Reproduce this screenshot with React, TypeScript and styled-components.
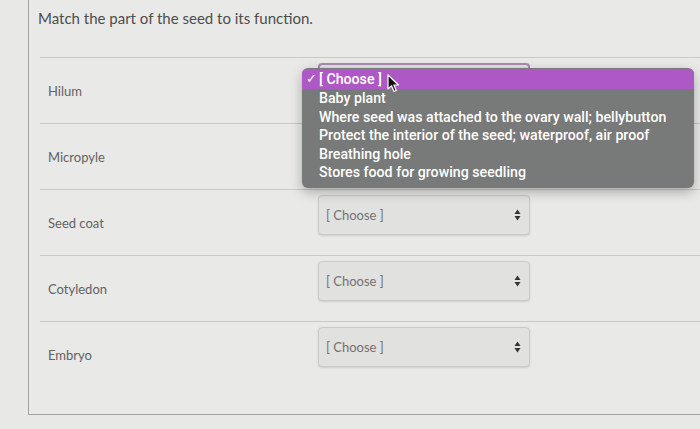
import styled, { createGlobalStyle } from 'styled-components';

const GlobalStyle = createGlobalStyle`
  html, body {
    margin: 0;
    padding: 0;
    background: #e8e8e6;
    width: 700px;
    height: 429px;
    overflow: hidden;
  }
  * {
    box-sizing: border-box;
  }
`;

const Frame = styled.div`
  margin-left: 28px;
  width: 672px;
  height: 415px;
  border-left: 1px solid #a3a3a1;
  border-bottom: 1px solid #a3a3a1;
  background: #e9e9e7;
  font-family: Lato, 'Noto Sans', sans-serif;
`;

const Title = styled.div`
  height: 57px;
  padding: 8px 0 0 9px;
  font-size: 15px;
  line-height: 20px;
  color: #4d4d4d;
`;

const Rows = styled.div`
  margin-left: 11px;
`;

const Row = styled.div`
  position: relative;
  display: grid;
  grid-template-columns: 278px 212px;
  align-items: center;
  height: 66px;
  border-top: 1px solid #c8c8c6;
`;

const Label = styled.div`
  padding-left: 8px;
  font-size: 13px;
  color: #626262;
`;

const Select = styled.div<{ open?: boolean }>`
  align-self: start;
  margin-top: 5px;
  height: 40px;
  display: flex;
  align-items: center;
  justify-content: space-between;
  padding: 0 8px 0 7px;
  background: #e1e1df;
  border: ${(p) => (p.open ? '2px solid #a58db2' : '1px solid #cacac8')};
  border-radius: 4px;
  box-shadow: 0 1px 2px rgba(0, 0, 0, 0.12);
  font-size: 13px;
  color: #727272;
`;

const Menu = styled.div`
  position: absolute;
  left: 262px;
  top: 10px;
  width: 392px;
  padding: 1px 0 6px;
  background: #787979;
  border-radius: 6px;
  box-shadow: 0 4px 12px rgba(0, 0, 0, 0.28);
  z-index: 5;
  font-family: Roboto, 'Liberation Sans', sans-serif;
  font-weight: 500;
  font-size: 14.2px;
  color: #ffffff;
`;

const Item = styled.div<{ active?: boolean }>`
  display: flex;
  align-items: center;
  height: ${(p) => (p.active ? '20px' : '18.6px')};
  line-height: ${(p) => (p.active ? '20px' : '18.6px')};
  padding-left: 4px;
  background: ${(p) => (p.active ? '#ad58c4' : 'transparent')};
  border-radius: ${(p) => (p.active ? '5px 5px 0 0' : '0')};
  white-space: nowrap;
`;

const Check = styled.span`
  display: inline-block;
  width: 13px;
  font-size: 13px;
`;

const Cursor = styled.svg`
  position: absolute;
  left: 85px;
  top: 6px;
  z-index: 6;
`;

const options = [
  'Baby plant',
  'Where seed was attached to the ovary wall; bellybutton',
  'Protect the interior of the seed; waterproof, air proof',
  'Breathing hole',
  'Stores food for growing seedling',
];

const parts = ['Hilum', 'Micropyle', 'Seed coat', 'Cotyledon', 'Embryo'];

function Arrows() {
  return (
    <svg width="7" height="12" viewBox="0 0 7 12">
      <path d="M3.5 0.5 L6.5 5 L0.5 5 Z" fill="#333" />
      <path d="M3.5 11.5 L6.5 7 L0.5 7 Z" fill="#333" />
    </svg>
  );
}

function App() {
  return (
    <>
      <GlobalStyle />
      <Frame>
        <Title>Match the part of the seed to its function.</Title>
        <Rows>
          {parts.map((part, i) => (
            <Row key={part}>
              <Label>{part}</Label>
              <Select open={i === 0}>
                <span>[ Choose ]</span>
                <Arrows />
              </Select>
              {i === 0 && (
                <Menu>
                  <Item active>
                    <Check>✓</Check>[ Choose ]
                  </Item>
                  {options.map((o) => (
                    <Item key={o}>
                      <Check />
                      {o}
                    </Item>
                  ))}
                  <Cursor width="13" height="19" viewBox="0 0 13 19">
                    <path
                      d="M1 1 L1 15 L4.5 11.8 L7 17.5 L9.3 16.5 L6.9 11 L11.5 11 Z"
                      fill="#111"
                      stroke="#fff"
                      strokeWidth="1.2"
                      strokeLinejoin="round"
                    />
                  </Cursor>
                </Menu>
              )}
            </Row>
          ))}
        </Rows>
      </Frame>
    </>
  );
}

export default App;
